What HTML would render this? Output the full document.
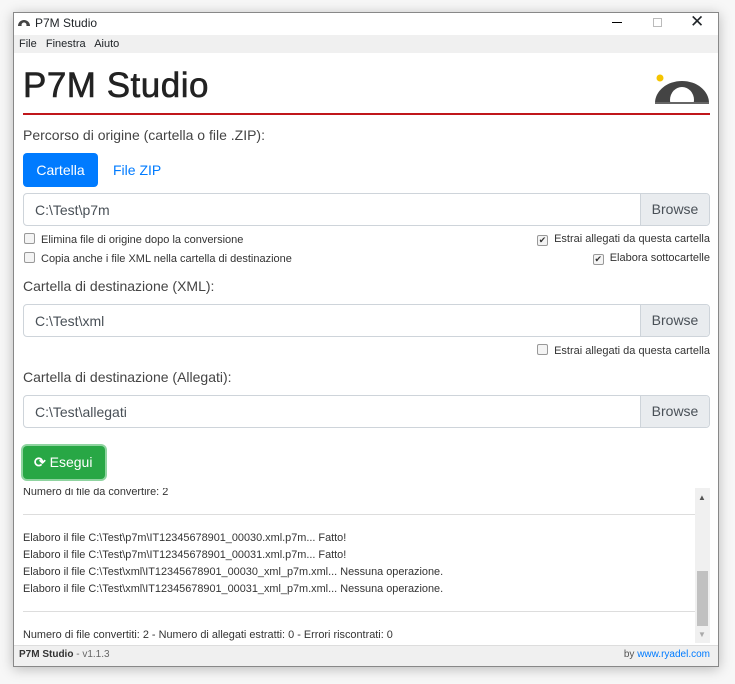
<!DOCTYPE html>
<html><head><style>
*{margin:0;padding:0;box-sizing:border-box}
body{width:735px;height:684px;background:#f7f7f7;font-family:"Liberation Sans",sans-serif;position:relative;overflow:hidden;color:#212529}
.a{position:absolute;white-space:nowrap}
.win{position:absolute;left:13px;top:12px;width:706px;height:655px;background:#fff;border:1px solid #888;box-shadow:0 2px 12px rgba(0,0,0,.25)}
.inp{position:absolute;left:23px;width:687px;height:33px;border:1px solid #ced4da;border-radius:4px;background:#fff}
.inp span{position:absolute;left:11px;top:8px;font-size:14px;color:#495057}
.inp b{position:absolute;right:0;top:0;height:31px;width:69px;background:#e9ecef;border-left:1px solid #ced4da;font-weight:normal;font-size:14px;color:#495057;text-align:center;line-height:31px;border-radius:0 3px 3px 0}
.cb{display:inline-block;vertical-align:-1px;width:11px;height:11px;border:1px solid #999;border-radius:2px;background:#f4f4f4;font-size:9px;line-height:9px;text-align:center;margin-right:6px}
.s{font-size:11px;color:#333}
.l{font-size:10.9px;color:#333;position:absolute;white-space:nowrap}
</style></head><body>
<div class="win"></div>
<svg class="a" style="left:17px;top:18px" width="14" height="9"><path d="M1 8 A6 6 0 0 1 13 8Z" fill="#444"/><circle cx="7" cy="7" r="2.5" fill="#fff"/></svg>
<div class="a" style="left:35px;top:16px;font-size:12px">P7M Studio</div>
<div class="a" style="left:612px;top:22px;width:10px;height:1px;background:#000"></div>
<div class="a" style="left:653px;top:18px;width:9px;height:9px;border:1px solid #bbb"></div>
<div class="a" style="left:690px;top:12px;font-size:17px">✕</div>
<div class="a" style="left:14px;top:35px;width:704px;height:18px;background:#f0f0f0"></div>
<div class="a" style="left:19px;top:38px;font-size:11px">File&nbsp;&nbsp; Finestra&nbsp;&nbsp; Aiuto</div>
<div class="a" style="left:23px;top:66px;font-size:35px;color:#222;letter-spacing:0.5px;-webkit-text-stroke:0.6px #222">P7M Studio</div>
<svg class="a" style="left:653px;top:73px" width="58" height="34"><circle cx="7" cy="5" r="3.5" fill="#f5c400"/><path d="M2 30 A27 22 0 0 1 56 30Z" fill="#444"/><ellipse cx="29" cy="27" rx="12" ry="13" fill="#fff"/><rect x="2" y="29" width="54" height="2" fill="#666"/></svg>
<div class="a" style="left:23px;top:113px;width:687px;height:2px;background:#c0161b"></div>
<div class="a" style="left:23px;top:127px;font-size:14px;color:#444">Percorso di origine (cartella o file .ZIP):</div>
<div class="a" style="left:23px;top:153px;width:75px;height:34px;background:#007bff;border-radius:4px;color:#fff;font-size:14px;text-align:center;line-height:34px">Cartella</div>
<div class="a" style="left:113px;top:162px;font-size:14px;color:#007bff">File ZIP</div>
<div class="inp" style="top:193px"><span>C:\Test\p7m</span><b>Browse</b></div>
<div class="a s" style="left:24px;top:233px"><span class="cb"></span>Elimina file di origine dopo la conversione</div>
<div class="a s" style="left:24px;top:252px"><span class="cb"></span>Copia anche i file XML nella cartella di destinazione</div>
<div class="a s" style="right:25px;top:233px"><span class="cb">✔</span>Estrai allegati da questa cartella</div>
<div class="a s" style="right:25px;top:252px"><span class="cb">✔</span>Elabora sottocartelle</div>
<div class="a" style="left:23px;top:278px;font-size:14px;color:#444">Cartella di destinazione (XML):</div>
<div class="inp" style="top:304px"><span>C:\Test\xml</span><b>Browse</b></div>
<div class="a s" style="right:25px;top:344px"><span class="cb"></span>Estrai allegati da questa cartella</div>
<div class="a" style="left:23px;top:369px;font-size:14px;color:#444">Cartella di destinazione (Allegati):</div>
<div class="inp" style="top:395px"><span>C:\Test\allegati</span><b>Browse</b></div>
<div class="a" style="left:21px;top:444px;width:86px;height:37px;border-radius:6px;background:#8fd4a0"></div>
<div class="a" style="left:23px;top:446px;width:82px;height:33px;background:#28a745;border-radius:4px;color:#fff;font-size:14px;line-height:33px;padding-left:11px"><b>⟳</b> Esegui</div>
<div class="a" style="left:14px;top:488px;width:696px;height:155px;overflow:hidden">
<div class="l" style="top:-2px;left:9px">Numero di file da convertire: 2</div>
<div class="a" style="left:9px;top:26px;width:672px;height:1px;background:#ddd"></div>
<div class="l" style="top:44px;left:9px">Elaboro il file C:\Test\p7m\IT12345678901_00030.xml.p7m... Fatto!</div>
<div class="l" style="top:61px;left:9px">Elaboro il file C:\Test\p7m\IT12345678901_00031.xml.p7m... Fatto!</div>
<div class="l" style="top:78px;left:9px">Elaboro il file C:\Test\xml\IT12345678901_00030_xml_p7m.xml... Nessuna operazione.</div>
<div class="l" style="top:95px;left:9px">Elaboro il file C:\Test\xml\IT12345678901_00031_xml_p7m.xml... Nessuna operazione.</div>
<div class="a" style="left:9px;top:123px;width:672px;height:1px;background:#ddd"></div>
<div class="l" style="top:141px;left:9px">Numero di file convertiti: 2 - Numero di allegati estratti: 0 - Errori riscontrati: 0</div>
<div class="a" style="left:681px;top:0;width:15px;height:155px;background:#f0f0f0"></div>
<div class="a" style="left:683px;top:83px;width:11px;height:55px;background:#c1c1c1"></div>
<div class="a" style="left:684px;top:5px;font-size:8px;color:#555">▲</div>
<div class="a" style="left:684px;top:142px;font-size:8px;color:#aaa">▼</div>
</div>
<div class="a" style="left:14px;top:645px;width:704px;height:21px;background:#f0f0f0;border-top:1px solid #ddd"></div>
<div class="a" style="left:19px;top:649px;font-size:10px;color:#666"><b style="color:#333">P7M Studio</b> - v1.1.3</div>
<div class="a" style="right:25px;top:649px;font-size:10px;color:#555">by <span style="color:#007bff">www.ryadel.com</span></div>
</body></html>
